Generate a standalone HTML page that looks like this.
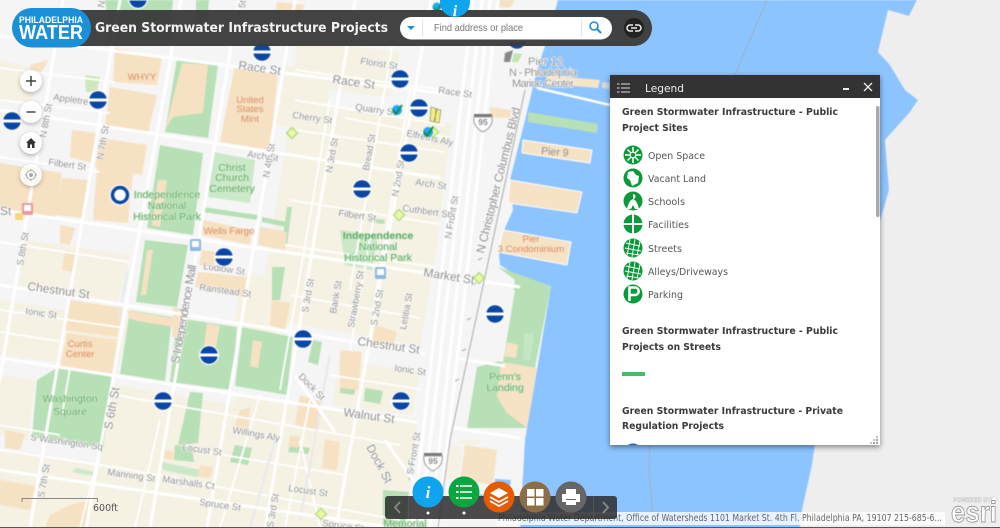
<!DOCTYPE html>
<html lang="en">
<head>
<meta charset="utf-8">
<title>Green Stormwater Infrastructure Projects</title>
<style>
html,body{margin:0;padding:0;width:1000px;height:528px;overflow:hidden;background:#f4f4f4}
svg{position:absolute;left:0;top:0;display:block}
#map{filter:blur(.6px)}
.g text{font-family:"Liberation Sans",sans-serif;fill:#8e8e8e;font-size:9.5px;paint-order:stroke;stroke:#fff;stroke-width:1.2px}
.g text.b{font-size:12px}
.p text{font-family:"Liberation Sans",sans-serif;fill:#5fa963;font-size:10.5px;text-anchor:middle;paint-order:stroke;stroke:#d8efd6;stroke-width:1px}
.o text{font-family:"Liberation Sans",sans-serif;fill:#d98d62;font-size:9.5px;text-anchor:middle}
.ui text{font-family:"DejaVu Sans",sans-serif}
</style>
</head>
<body>
<svg id="map" width="1000" height="528" viewBox="0 0 1000 528">
<defs>
<g id="m"><circle r="10" fill="#fff"/><circle r="8.8" fill="#0a47a5"/><rect x="-9" y="-1.5" width="18" height="3" fill="#fff"/></g>
<g id="d"><path d="M0-5.5L5.500 0 0 5.500-5.500 0Z" fill="#eef7a6" stroke="#a6d97c" stroke-width="1.200"/></g>
<g id="s"><path d="M-9-8H9V-4H-9Z" fill="#777"/><path d="M-9-5H9C10 2 6 7 0 10C-6 7-10 2-9-5Z" fill="#fff" stroke="#999"/><text y="3" text-anchor="middle" font-family="Liberation Sans,sans-serif" font-size="8.500" fill="#888" font-weight="bold">95</text></g>
</defs>
<rect width="1000" height="528" fill="#f5f5f5"/>

<!-- beige blocks -->
<g fill="#f5f1e3">
<path d="M293 100L458 125 420 345 258 318Z"/>
<path d="M0 300L130 320 118 370 0 355Z"/>
<path d="M0 375L35 380 28 440 0 435Z"/>
<path d="M0 450L100 465 90 528 0 528Z"/>
<path d="M115 385L235 405 215 528 85 528Z"/>
<path d="M235 395L425 420 400 528 205 528Z"/>
<path d="M25 240L130 255 118 302 18 288Z"/>
<path d="M298 40L400 52 390 97 292 85Z"/>
<path d="M283 65L330 72 325 130 275 125Z"/>
<path d="M340 360L420 372 412 415 332 405Z"/>
<path d="M0 60L40 70 30 105 0 100Z"/>
<path d="M240 272L285 280 275 335 235 325Z"/>
<path d="M430 385L448 385 425 475 405 475Z"/>
<path d="M460 440L480 440 470 480 455 480Z"/>
</g>

<!-- parks -->
<g fill="#b7e0b6">
<path d="M105 0H173L170 40 110 40Z"/>
<path d="M196 0H209L207 25 196 25Z"/>
<path d="M177 58L218 65 208 138 165 132Z"/>
<path d="M160 145L203 153 193 235 147 228Z"/>
<path d="M145 240L188 245 177 307 136 302Z"/>
<path d="M130 310L172 317 165 381 120 374Z"/>
<path d="M177 318L237 327 232 390 170 382Z"/>
<path d="M242 327L293 337 287 395 235 386Z"/>
<path d="M57 368L113 377 103 448 32 437 37 380Z"/>
<path d="M190 392L203 393 198 443 178 445Z"/>
<path d="M175 445L192 448 194 462 174 460Z"/>
<path d="M203 207L258 215 258 220 203 212Z"/>
<path d="M262 217L287 222 287 227 262 222Z"/>
<path d="M287 207L292 207 287 245 282 245Z"/>
<path d="M272 267L285 267 280 300 272 300Z"/>
<path d="M430 357L438 358 433 400 425 400Z"/>
<path d="M443 358L448 358 442 402 437 400Z"/>
<path d="M451 360L456 360 450 403 446 403Z"/>
<path d="M423 400L428 402 415 480 408 480Z"/>
<path d="M235 445L252 448 248 465 230 462Z"/>
<path d="M383 490L420 493 423 528H383Z"/>
<path d="M340 385L356 387 354 395 340 393Z"/>
<path d="M365 388L383 391 380 404 364 401Z"/>
<path d="M290 445L310 448 308 454 288 452Z"/>
<path d="M313 340L322 342 318 365 308 362Z"/>
<path d="M340 230L378 235 372 270 345 265Z" fill="#cde8c8"/>
<path d="M370 218L385 220 384 224 369 222Z"/>
<path d="M85 75L100 77 97 92 86 92Z" fill="#cfe8bb"/>
</g>
<g fill="#cbe9c8">
<path d="M213 152L255 160 250 203 208 197Z"/>
<path d="M162 462L200 470 198 477 162 470Z"/>
<path d="M75 468L95 472 94 476 73 472Z"/>
</g>

<!-- tan buildings -->
<g fill="#f6e1c3">
<path d="M115 48L162 57 157 85 113 82Z"/>
<path d="M110 87L157 95 148 133 105 125Z"/>
<path d="M235 65L278 73 270 150 220 142Z"/>
<path d="M72 130L97 133 92 163 70 157Z"/>
<path d="M100 138L147 145 142 175 95 167Z"/>
<path d="M0 163L62 173 55 218 0 208Z"/>
<path d="M62 178L88 180 82 218 55 215Z"/>
<path d="M97 167L133 172 128 223 93 220Z"/>
<path d="M203 220L252 230 250 245 202 235Z"/>
<path d="M260 227L287 232 285 250 258 245Z"/>
<path d="M202 250L216 252 214 268 199 265Z"/>
<path d="M198 272L247 277 243 297 195 287Z"/>
<path d="M70 300L123 308 117 337 65 330Z"/>
<path d="M67 333L117 340 112 375 60 368Z"/>
<path d="M158 180L167 180 160 227 152 225Z"/>
<path d="M182 63L208 65 203 113 173 117 165 130 177 83Z"/>
<path d="M147 250L153 250 146 295 141 295Z"/>
<path d="M128 310L177 319 175 327 137 321 128 318Z"/>
<path d="M173 307L187 309 182 337 172 337Z"/>
<path d="M207 323L220 326 216 347 204 346Z"/>
<path d="M253 340L262 342 258 368 250 366Z"/>
<path d="M30 65L48 60 40 75 32 82Z"/>
<path d="M60 225L75 228 70 245 60 243Z"/>
<path d="M65 250L78 253 74 272 62 270Z"/>
<path d="M272 300L290 303 285 330 270 325Z"/>
<path d="M375 325L397 332 392 350 372 346Z"/>
<path d="M340 350L362 352 358 390 340 388Z"/>
<path d="M5 430L25 434 20 450 5 448Z"/>
<path d="M0 480L35 486 30 510 0 505Z"/>
<path d="M70 505L90 500 85 528 45 528 50 515Z"/>
<path d="M240 410L250 408 248 435 235 425Z"/>
<path d="M200 465L213 467 210 478 198 476Z"/>
<path d="M165 450L175 452 172 460 164 458Z"/>
<path d="M290 435L300 437 298 448 288 446Z"/>
<path d="M300 395L322 402 318 430 295 425Z"/>
<path d="M325 440L340 442 337 470 322 468Z"/>
<path d="M490 0L515 0 510 8 488 6Z"/>
<path d="M277 2L305 5 300 15 275 12Z"/>
<path d="M490 107L512 110 508 118 490 117Z"/>
</g>

<!-- water -->
<path d="M558 0L917 0 909 16 888 10 878 52 890 65 905 90 918 100 910 112 885 140 889 190 815 445 812 465 802 510 800 528H520L525 440 537 370 551 286 520 278 500 265 499 255 505 228 513 210 510 180 525 120 537 70 547 40Z" fill="#8cc4ff"/>
<path d="M482 478L511 480 508 500 478 498Z" fill="#8cc4ff"/>
<path d="M767 0L735 75M650 445L649 470 654 528" stroke="#a9a9a9" stroke-width=".8" fill="none"/>

<!-- land at the bank -->
<path d="M498 267L551 286 535 367 527 428 467 428 477 367 503 360 515 280Z" fill="#b7e0b6"/>
<path d="M503 362L537 368 527 428 507 413 497 397 500 370Z" fill="#f6e2c5"/>
<path d="M507 342L518 345 516 358 504 356Z" fill="#f6e2c5"/>
<path d="M524 333L534 334 530 360 523 360Z" fill="#c5e6c3"/>
<path d="M455 285L515 290 503 362 425 352Z" fill="#f5f5f5"/>
<path d="M547 75L600 80 598 88 545 84Z" fill="#f6e4c6"/>
<path d="M602 82L610 83 610 89 602 88Z" fill="#d6d6d6"/>
<path d="M537 88L610 105" stroke="#fff" stroke-width="2.500"/>
<path d="M528 112L598 124 597 133 528 122Z" fill="#b7e0b6"/>
<path d="M523 140L592 150 590 163 522 153Z" fill="#f6e2c5" stroke="#fff"/>
<path d="M510 180L582 192 577 213 508 203Z" fill="#f6e2c5" stroke="#fff"/>
<path d="M503 230L571 242 567 265 498 252Z" fill="#f6e2c5" stroke="#fff"/>
<path d="M498 98L517 103 513 118 496 115Z" fill="#f5f5f5"/>
<path d="M490 107L512 110 510 118 490 116Z" fill="#f6e1c3"/>
<path d="M505 53L513 50 510 62 504 62Z" fill="#888"/><path d="M514 53L522 54 518 62 512 62Z" fill="#bfe5b0"/>
<path d="M425 440L500 447 490 495 420 490Z" fill="#f5f5f5"/>
<path d="M450 444L495 450 495 495 443 490Z" fill="#f5f5f5"/>
<path d="M465 445L497 450 493 485 460 480Z" fill="#f6e3c6"/>
<path d="M451 445L462 447 458 480 446 478Z" fill="#f5f1e3"/>

<!-- minor roads -->
<g stroke="#fff" stroke-width="1.800" fill="none">
<path d="M0 68L115 82M0 100L110 113M0 157L100 172M0 242L130 262M0 310L125 328M0 332L65 342M0 425L60 435M0 450L120 468 235 490 400 520M115 395L400 445M205 452L345 475M295 70L460 92M295 100L445 125M345 118L460 140M295 130L445 152M290 200L445 225M285 245L455 270M290 295L420 318M330 375L425 390M70 368L62 415M100 450L80 528M160 420L135 528M260 395L220 528M310 400L285 528M330 100L280 390M395 30L350 290M375 210L350 350M410 90L375 300M300 440L320 528"/>
</g>
<g stroke="#e8e8f0" stroke-width="2" fill="none"><path d="M128 270L118 320M275 440L250 528M330 355L300 520M425 445L415 520"/></g>

<!-- main roads -->
<g stroke="#fff" stroke-width="3" fill="none">
<path d="M63 0L-25 528M120 0L30 528M181 0L86 528M239 0L150 528M295 0L207 528M355 0L265 528M431 0L336 528"/>
<path d="M0 36L470 97M0 110L440 178M0 210L520 287M0 285L505 366M0 358L520 438M0 470L410 530"/>
</g>
<path d="M465 0H500L440 528H405Z" fill="#f5f5f5"/>
<g stroke="#fff" stroke-width="3" fill="none"><path d="M473 0L412 528M482 0L420 528M490 0L430 528M498 0L438 528"/></g>
<path d="M525 90L450 440 438 528" stroke="#aaa" stroke-width="1" fill="none"/>
<path d="M482 258L478 260M476 283L472 285M471 318L467 320M466 349L462 351M459 379L455 381" stroke="#aaa"/>
<path d="M385 440L420 490" stroke="#fff" stroke-width="3"/>
<path d="M295 375L335 432" stroke="#fff" stroke-width="3"/>

<!-- labels -->
<g class="g">
<text class="b" transform="rotate(8 238 69)" x="238" y="69">Race St</text>
<text class="b" transform="rotate(8 332 83)" x="332" y="83">Race St</text>
<text transform="rotate(8 438 93)" x="438" y="93">Race St</text>
<text transform="rotate(8 360 64)" x="360" y="64">Florist St</text>
<text transform="rotate(8 355 110)" x="355" y="110">Quarry St</text>
<text transform="rotate(8 292 118)" x="292" y="118">Cherry St</text>
<text transform="rotate(12 406 136)" x="406" y="136">Elfreths Aly</text>
<text transform="rotate(8 53 100)" x="53" y="100">Appletree St</text>
<text transform="rotate(8 48 165)" x="48" y="165">Filbert St</text>
<text transform="rotate(8 247 157)" x="247" y="157">Arch St</text>
<text transform="rotate(8 415 185)" x="415" y="185">Arch St</text>
<text transform="rotate(8 338 216)" x="338" y="216">Filbert St</text>
<text transform="rotate(8 402 211)" x="402" y="211">Cuthbert St</text>
<text class="b" x="0" y="215" >St</text>
<text class="b" transform="rotate(9 423 276)" x="423" y="276">Market St</text>
<text transform="rotate(8 203 269)" x="203" y="269">Ludlow St</text>
<text transform="rotate(8 199 290)" x="199" y="290">Ranstead St</text>
<text class="b" transform="rotate(8 27 290)" x="27" y="290">Chestnut St</text>
<text transform="rotate(8 25 314)" x="25" y="314">Ionic St</text>
<text class="b" transform="rotate(8 357 345)" x="357" y="345">Chestnut St</text>
<text transform="rotate(8 394 371)" x="394" y="371">Ionic St</text>
<text class="b" transform="rotate(8 343 416)" x="343" y="416">Walnut St</text>
<text transform="rotate(8 30 440)" x="30" y="440">S Washington Sq</text>
<text transform="rotate(8 182 450)" x="182" y="450">Locust St</text>
<text transform="rotate(8 107 475)" x="107" y="475">Manning St</text>
<text transform="rotate(8 162 482)" x="162" y="482">Marshalls Ct</text>
<text transform="rotate(10 232 433)" x="232" y="433">Willings Aly</text>
<text transform="rotate(8 288 491)" x="288" y="491">Locust St</text>
<text transform="rotate(8 199 505)" x="199" y="505">Spruce St</text>
<text transform="rotate(8 322 526)" x="322" y="526">Spruce St</text>
<text transform="rotate(-80 46 138)" x="46" y="138">N 8th St</text>
<text transform="rotate(-80 103 160)" x="103" y="160">N 7th St</text>
<text transform="rotate(-80 243 18)" x="243" y="18">N 5th St</text>
<text transform="rotate(-80 104 8)" x="104" y="8">N 6</text>
<text transform="rotate(-80 23 266)" x="23" y="266">S 8th St</text>
<text class="b" transform="rotate(-80 112 430)" x="112" y="430">S 6th St</text>
<text transform="rotate(-80 44 498)" x="44" y="498">S 7th St</text>
<text class="b" transform="rotate(-80 179 364)" x="179" y="364" textLength="100">S Independence Mall</text>
<text transform="rotate(-80 269 178)" x="269" y="178">N 4th St</text>
<text transform="rotate(-80 332 173)" x="332" y="173">N 3rd St</text>
<text transform="rotate(-80 308 313)" x="308" y="313">S 3rd St</text>
<text transform="rotate(-80 336 314)" x="336" y="314">Bank St</text>
<text transform="rotate(-80 354 328)" x="354" y="328">Strawberry St</text>
<text transform="rotate(-80 377 326)" x="377" y="326">S 2nd St</text>
<text transform="rotate(-80 406 330)" x="406" y="330">Letitia St</text>
<text transform="rotate(-80 451 239)" x="451" y="239">N Front St</text>
<text transform="rotate(-80 398 197)" x="398" y="197">N 2nd St</text>
<text transform="rotate(-80 369 171)" x="369" y="171">Bread St</text>
<text transform="rotate(-80 413 475)" x="413" y="475">S Front St</text>
<text class="b" transform="rotate(62 366 447)" x="366" y="447">Dock St</text>
<text transform="rotate(46 298 377)" x="298" y="377">Dock St</text>
<text transform="rotate(-80 273 528)" x="273" y="528">S 3rd St</text>
<text class="b" transform="rotate(-76 484 254)" x="484" y="254" textLength="150">N Christopher Columbus Blvd</text>
<text x="528" y="65" style="font-size:11px">Pier 12</text>
<text x="509" y="76" style="font-size:11px" textLength="68">N - Philadelphia</text>
<text x="512" y="87" style="font-size:11px" textLength="62">Marine Center</text>
<text transform="rotate(5 541 154)" x="541" y="154" style="font-size:10.500px;stroke:none">Pier 9</text>
</g>
<g class="p">
<text x="167" y="198">Independence</text><text x="167" y="209">National</text><text x="167" y="220">Historical Park</text>
<text x="378" y="239" font-weight="bold">Independence</text><text x="378" y="250">National</text><text x="378" y="261">Historical Park</text>
<text x="232" y="171">Christ</text><text x="232" y="181">Church</text><text x="232" y="192">Cemetery</text>
<text x="505" y="380">Penn's</text><text x="505" y="391">Landing</text>
<text x="70" y="402">Washington</text><text x="70" y="415">Square</text>
<text x="405" y="527">Memorial</text>
</g>
<g class="o">
<text x="142" y="80">WHYY</text>
<text x="250" y="103">United</text><text x="250" y="112">States</text><text x="250" y="122">Mint</text>
<text x="229" y="234">Wells Fargo</text>
<text x="80" y="347">Curtis</text><text x="80" y="357">Center</text>
<text x="531" y="242">Pier</text><text x="531" y="252">3 Condominium</text>
</g>

<use href="#s" x="483" y="122"/>
<use href="#s" x="433" y="461"/>
<rect x="22" y="203" width="11" height="12" rx="1.500" fill="#e59aa0"/><rect x="24" y="205" width="7" height="6" fill="#fff"/>
<rect x="15" y="213" width="8" height="7" rx="1" fill="#f5d77a"/>
<rect x="190" y="239" width="11" height="12" rx="1.500" fill="#8db8e4"/><rect x="192" y="241" width="7" height="6" fill="#fff"/>
<rect x="375" y="267" width="11" height="12" rx="1.500" fill="#8db8e4"/><rect x="377" y="269" width="7" height="6" fill="#fff"/>

<!-- markers -->
<use href="#d" x="292" y="133"/><use href="#d" x="399" y="215"/><use href="#d" x="479" y="278"/><use href="#d" x="321" y="514"/><use href="#d" x="433" y="132"/>
<path d="M431 107L437 109 434 122 430 121ZM436 109L441 110 439 123 435 122Z" fill="#f2f07a" stroke="#777" stroke-width=".6"/>
<g><circle cx="397" cy="110" r="5" fill="#22a8ee"/><path d="M393 110L396 114 402 105" stroke="#0a8a3c" stroke-width="1.700" fill="none"/></g>
<g><circle cx="428" cy="132" r="5" fill="#22a8ee"/><path d="M424 132L427 136 433 127" stroke="#0a8a3c" stroke-width="1.700" fill="none"/></g>
<g><circle cx="437" cy="7" r="4.500" fill="#22a8ee"/><path d="M434 8L437 11 441 4" stroke="#0a8a3c" stroke-width="1.500" fill="none"/></g>
<use href="#m" x="138" y="-1"/><use href="#m" x="262" y="52"/><use href="#m" x="98" y="100"/><use href="#m" x="12" y="121"/><use href="#m" x="400" y="79"/><use href="#m" x="419" y="108"/><use href="#m" x="409" y="153"/><use href="#m" x="362" y="189"/><use href="#m" x="224" y="257"/><use href="#m" x="303" y="339"/><use href="#m" x="209" y="355"/><use href="#m" x="163" y="401"/><use href="#m" x="495" y="314"/><use href="#m" x="401" y="401"/><use href="#m" x="517" y="40"/>
<circle cx="120" cy="195" r="10.500" fill="#fff"/><circle cx="120" cy="195" r="7.500" fill="#fff" stroke="#0a47a5" stroke-width="3.500"/>
<!-- east land colour -->
<path d="M917 0L909 16 888 10 878 52 890 65 905 90 918 100 910 112 885 140 889 190 815 445 812 465 802 510 800 528H1000V0Z" fill="#eeeeee"/>
</svg>

<svg class="ui" width="1000" height="528" viewBox="0 0 1000 528" style="filter:blur(.3px)">
<defs>
<filter id="sh" x="-20%" y="-20%" width="140%" height="140%"><feDropShadow dx="0" dy="1.500" stdDeviation="2" flood-color="#000" flood-opacity=".3"/></filter>
<filter id="sh2" x="-5%" y="-5%" width="110%" height="110%"><feDropShadow dx="0" dy="2" stdDeviation="3" flood-color="#000" flood-opacity=".45"/></filter>
<clipPath id="pc"><rect x="610" y="75" width="270" height="370"/></clipPath>
</defs>

<!-- header bar -->
<path d="M30 10H634A18 18 0 0 1 634 46H30Z" fill="#3b3b3b" fill-opacity=".96"/>
<rect x="12" y="8" width="79" height="39.500" rx="19.750" fill="#1b8fd8"/>
<text x="19" y="23" font-weight="bold" font-size="9.500" fill="#fff" textLength="64" lengthAdjust="spacingAndGlyphs" style="font-family:'Liberation Sans',sans-serif">PHILADELPHIA</text>
<text x="19" y="39" font-weight="bold" font-size="20" fill="#fff" textLength="64" lengthAdjust="spacingAndGlyphs" style="font-family:'Liberation Sans',sans-serif">WATER</text>
<text x="95" y="32" font-weight="bold" font-size="13" fill="#f2f2f2" textLength="293" lengthAdjust="spacingAndGlyphs">Green Stormwater Infrastructure Projects</text>
<circle cx="455" cy="2" r="15" fill="#0ea5ee"/>
<text x="455" y="16" text-anchor="middle" font-size="16" font-weight="bold" font-style="italic" fill="#fff" style="font-family:'Liberation Serif',serif">i</text>
<rect x="400" y="17" width="212" height="22.500" rx="11.250" fill="#fff"/>
<path d="M407 26H415L411 30Z" fill="#1b8fd8"/>
<path d="M422.500 20V36M581.500 20V36" stroke="#e2e2e2"/>
<text x="434" y="31" font-size="10.500" fill="#777" textLength="89" lengthAdjust="spacingAndGlyphs" style="font-family:'Liberation Sans',sans-serif">Find address or place</text>
<circle cx="594" cy="26" r="4" fill="none" stroke="#1b8fd8" stroke-width="1.600"/><path d="M597 29L601 33" stroke="#1b8fd8" stroke-width="2"/>
<circle cx="634" cy="28" r="10" fill="#222"/>
<path d="M633 25H630A3 3 0 0 0 630 31H633M635 25H638A3 3 0 0 1 638 31H635M631 28H637" fill="none" stroke="#eee" stroke-width="1.500"/>

<!-- map controls -->
<g filter="url(#sh)">
<circle cx="31" cy="81" r="11" fill="#fff"/>
<circle cx="31" cy="112" r="11" fill="#fff" fill-opacity=".92"/>
<circle cx="31" cy="143" r="11" fill="#fff"/>
<circle cx="31" cy="175" r="11" fill="#fff" fill-opacity=".85"/>
</g>
<path d="M26 81H36M31 76V86" stroke="#444" stroke-width="1.500"/>
<path d="M26.500 112H35.500" stroke="#666" stroke-width="1.800"/>
<path d="M31 138L36 143H34.500V148H32V144.500H30V148H27.500V143H26Z" fill="#333"/>
<circle cx="31" cy="175" r="4.500" fill="none" stroke="#aaa"/><circle cx="31" cy="175" r="2" fill="#aaa"/><path d="M31 169V171M31 179V181M25 175H27M35 175H37" stroke="#aaa"/>

<!-- legend -->
<rect x="610" y="75" width="270" height="370" fill="#fff" filter="url(#sh2)"/>
<rect x="610" y="75" width="270" height="23" fill="#333"/>
<path d="M621 84H630M621 88H630M621 92H630" stroke="#bbb" stroke-width="1.300"/><path d="M617 84H619.500M617 88H619.500M617 92H619.500" stroke="#bbb" stroke-width="1.300"/>
<text x="645" y="92" font-size="11" fill="#eee" textLength="39" lengthAdjust="spacingAndGlyphs">Legend</text>
<path d="M843 89H849" stroke="#eee" stroke-width="2"/>
<path d="M864 83L872 91M872 83L864 91" stroke="#eee" stroke-width="1.300"/>
<rect x="876" y="106" width="3.500" height="111" rx="1.500" fill="#aaa"/>
<g font-weight="bold" font-size="10" fill="#3a3a3a">
<text x="622" y="115" textLength="216" lengthAdjust="spacingAndGlyphs">Green Stormwater Infrastructure - Public</text>
<text x="622" y="131" textLength="66" lengthAdjust="spacingAndGlyphs">Project Sites</text>
<text x="622" y="334" textLength="216" lengthAdjust="spacingAndGlyphs">Green Stormwater Infrastructure - Public</text>
<text x="622" y="350" textLength="99" lengthAdjust="spacingAndGlyphs">Projects on Streets</text>
<text x="622" y="414" textLength="221" lengthAdjust="spacingAndGlyphs">Green Stormwater Infrastructure - Private</text>
<text x="622" y="429" textLength="102" lengthAdjust="spacingAndGlyphs">Regulation Projects</text>
</g>
<g font-size="9.500" fill="#555">
<text x="648" y="159" textLength="57" lengthAdjust="spacingAndGlyphs">Open Space</text>
<text x="648" y="182" textLength="58" lengthAdjust="spacingAndGlyphs">Vacant Land</text>
<text x="648" y="205" textLength="37" lengthAdjust="spacingAndGlyphs">Schools</text>
<text x="648" y="228" textLength="41" lengthAdjust="spacingAndGlyphs">Facilities</text>
<text x="648" y="252" textLength="34" lengthAdjust="spacingAndGlyphs">Streets</text>
<text x="648" y="275" textLength="80" lengthAdjust="spacingAndGlyphs">Alleys/Driveways</text>
<text x="648" y="298" textLength="35" lengthAdjust="spacingAndGlyphs">Parking</text>
</g>
<g fill="#0a9a3a">
<circle cx="633" cy="155" r="9.500"/><circle cx="633" cy="178" r="9.500"/><circle cx="633" cy="201" r="9.500"/><circle cx="633" cy="224" r="9.500"/><circle cx="633" cy="248" r="9.500"/><circle cx="633" cy="271" r="9.500"/><circle cx="633" cy="294" r="9.500"/>
</g>
<path d="M633 147V163M625 155H641M627.500 149.500L638.500 160.500M638.500 149.500L627.500 160.500" stroke="#fff" stroke-width="1.500"/><circle cx="633" cy="155" r="2.800" fill="#0a9a3a" stroke="#fff"/>
<path d="M628 172L633 171 636 175 639 176 638 183 632 186 630 180 627 178Z" fill="#fff"/>
<path d="M633 194A2.500 2.500 0 1 1 633.100 199C630 200 628 204 627 209H631L633 205 635 209H639C638 204 636 200 633 199Z" fill="#fff"/>
<path d="M633 214V234M623 224H643" stroke="#fff" stroke-width="2"/>
<path d="M626 243L640 246M625 248L641 251M626 253L640 255M630 239L627 256M635 239L632 257M640 241L637 256" stroke="#fff" stroke-width=".9"/>
<path d="M626 266L640 269M625 271L641 274M626 276L640 278M630 262L627 279M635 262L632 280M640 264L637 279" stroke="#fff" stroke-width=".9"/>
<path d="M629.500 301V287.500H635.500A3.800 3.800 0 0 1 635.500 295H629.500" fill="none" stroke="#fff" stroke-width="2.600"/>
<rect x="622" y="372" width="23" height="4" fill="#4cb96a"/>
<g clip-path="url(#pc)"><circle cx="633" cy="453" r="9.500" fill="#2a62b5"/></g>
<g fill="#333"><circle cx="877" cy="443" r=".8"/><circle cx="874" cy="443" r=".8"/><circle cx="871" cy="443" r=".6"/><circle cx="877" cy="440" r=".8"/><circle cx="874" cy="440" r=".6"/><circle cx="877" cy="437" r=".6"/></g>

<!-- attribution -->
<rect x="497" y="512" width="448" height="13" fill="#fff" fill-opacity=".78"/>
<text x="498" y="521" font-size="9.500" fill="#666" textLength="444" lengthAdjust="spacingAndGlyphs">Philadelphia Water Department, Office of Watersheds 1101 Market St. 4th Fl. Philadelphia PA, 19107 215-685-6...</text>
<rect x="0" y="527" width="1000" height="1" fill="#555"/>

<!-- dock -->
<rect x="385" y="496" width="232" height="23" rx="3" fill="#2b2b2b" fill-opacity=".85"/>
<path d="M408.500 496V519M593.500 496V519" stroke="#555"/>
<path d="M400 502L395 507.500 400 513" fill="none" stroke="#888" stroke-width="1.800"/>
<path d="M603 502L608 507.500 603 513" fill="none" stroke="#888" stroke-width="1.800"/>
<circle cx="428" cy="492" r="15.500" fill="#0ea5ee"/><circle cx="464" cy="492" r="15.500" fill="#0aa640"/><circle cx="499" cy="497" r="15.500" fill="#e65a00"/><circle cx="535" cy="497" r="15.500" fill="#8c6d46"/><circle cx="571" cy="497" r="15.500" fill="#666"/>
<text x="428" y="498" text-anchor="middle" font-size="17" font-weight="bold" font-style="italic" fill="#fff" style="font-family:'Liberation Serif',serif">i</text>
<path d="M460 486H472M460 492H472M460 498H472" stroke="#fff" stroke-width="1.500"/><path d="M456 486H458.500M456 492H458.500M456 498H458.500" stroke="#fff" stroke-width="2"/>
<path d="M499 488L508 493 499 498 490 493Z" fill="#fff"/><path d="M490 497L499 502 508 497M490 501L499 506 508 501" fill="none" stroke="#fff" stroke-width="1.800"/>
<g fill="#fff"><rect x="527" y="489" width="7.500" height="7.500"/><rect x="536" y="489" width="7.500" height="7.500"/><rect x="527" y="498" width="7.500" height="7.500"/><rect x="536" y="498" width="7.500" height="7.500"/></g>
<path d="M566 489H576V494H566Z" fill="#fff"/><path d="M562 494H580V502H576V499H566V502H562Z" fill="#fff"/><rect x="566" y="500" width="10" height="5" fill="#fff"/>
<circle cx="428" cy="513" r="1.500" fill="#fff"/><circle cx="464" cy="513" r="1.500" fill="#fff"/>

<!-- scale -->
<path d="M22 502V498.500H97.500V502" fill="none" stroke="#888" stroke-width="1"/>
<text x="93" y="511" font-size="9.500" fill="#555">600ft</text>

<!-- esri -->
<text x="953" y="502" font-size="6" font-weight="bold" fill="#fff" textLength="38" lengthAdjust="spacingAndGlyphs" stroke="#999" stroke-width=".25" style="font-family:'Liberation Sans',sans-serif">POWERED BY</text>
<circle cx="994" cy="499.500" r="2.500" fill="#fff" stroke="#aaa" stroke-width=".4"/>
<text x="951" y="522" font-size="30" font-weight="bold" fill="#fdfdfd" stroke="#9a9a9a" stroke-width=".9" textLength="46" lengthAdjust="spacingAndGlyphs" style="font-family:'Liberation Sans',sans-serif">esri</text>
</svg>
</body>
</html>
